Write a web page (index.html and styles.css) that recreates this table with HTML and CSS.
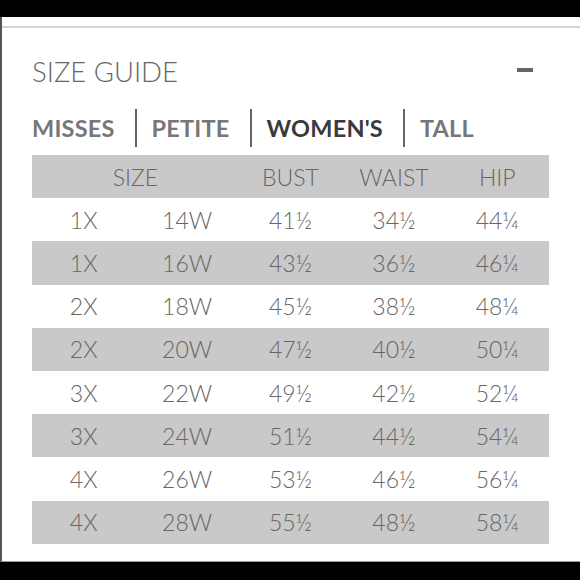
FILE: index.html
```html
<!DOCTYPE html>
<html>
<head>
<meta charset="utf-8">
<link rel="stylesheet" href="styles.css">
</head>
<body>
<div class="frame">
  <div class="panel">
    <div class="title-row">
      <h1 class="title">SIZE GUIDE</h1>
      <span class="collapse" aria-label="collapse"></span>
    </div>
    <nav class="tabs">
      <span class="tab">MISSES</span>
      <span class="sep"></span>
      <span class="tab">PETITE</span>
      <span class="sep"></span>
      <span class="tab active">WOMEN'S</span>
      <span class="sep"></span>
      <span class="tab">TALL</span>
    </nav>
    <div class="chart">
      <div class="row head"><span class="span2">SIZE</span><span>BUST</span><span>WAIST</span><span>HIP</span></div>
      <div class="row"><span>1X</span><span>14W</span><span>41½</span><span>34½</span><span>44¼</span></div>
      <div class="row alt"><span>1X</span><span>16W</span><span>43½</span><span>36½</span><span>46¼</span></div>
      <div class="row"><span>2X</span><span>18W</span><span>45½</span><span>38½</span><span>48¼</span></div>
      <div class="row alt"><span>2X</span><span>20W</span><span>47½</span><span>40½</span><span>50¼</span></div>
      <div class="row"><span>3X</span><span>22W</span><span>49½</span><span>42½</span><span>52¼</span></div>
      <div class="row alt"><span>3X</span><span>24W</span><span>51½</span><span>44½</span><span>54¼</span></div>
      <div class="row"><span>4X</span><span>26W</span><span>53½</span><span>46½</span><span>56¼</span></div>
      <div class="row alt"><span>4X</span><span>28W</span><span>55½</span><span>48½</span><span>58¼</span></div>
    </div>
  </div>
</div>
</body>
</html>
```

FILE: styles.css
```css
html, body {
  margin: 0;
  padding: 0;
  background: #000;
  overflow: hidden;
}
html {
  height: 100%;
}
body {
  height: 100%;
  padding-top: 17px;
  box-sizing: border-box;
  font-family: Lato, "Open Sans", "Liberation Sans", sans-serif;
}
.frame {
  height: 535px;
  background: #fff;
  border-left: 2px solid #555;
  border-bottom: 1px solid #9a9a9a;
  padding-top: 9px;
}
.panel {
  border-top: 2px solid #d4d4d4;
  padding: 0 0 0 30px;
}
.title-row {
  display: flex;
  justify-content: space-between;
  align-items: center;
  width: 517px;
  height: 34px;
  margin-top: 27px;
}
.title {
  margin: 0;
  font-size: 27.5px;
  font-weight: 300;
  color: #666;
  line-height: 34px;
}
.collapse {
  display: block;
  width: 16px;
  height: 4px;
  background: #666;
  margin-right: 16px;
  margin-top: -4px;
}
.tabs {
  display: flex;
  align-items: center;
  margin-top: 20px;
  height: 38px;
}
.tab {
  font-size: 23.5px;
  font-weight: 700;
  color: #777;
  line-height: 38px;
  letter-spacing: 0.2px;
}
.tab.active {
  color: #3a3a3a;
}
.sep {
  width: 2px;
  height: 38px;
  background: #666;
  margin: 0 15px 0 20px;
}
.chart {
  margin-top: 8px;
  width: 517px;
}
.row {
  display: grid;
  grid-template-columns: repeat(5, 1fr);
  height: 43.2px;
  align-items: center;
  text-align: center;
  font-size: 23px;
  font-weight: 300;
  color: #666;
}
.row.head, .row.alt {
  background: #c9c9c9;
}
.span2 {
  grid-column: span 2;
}
```
